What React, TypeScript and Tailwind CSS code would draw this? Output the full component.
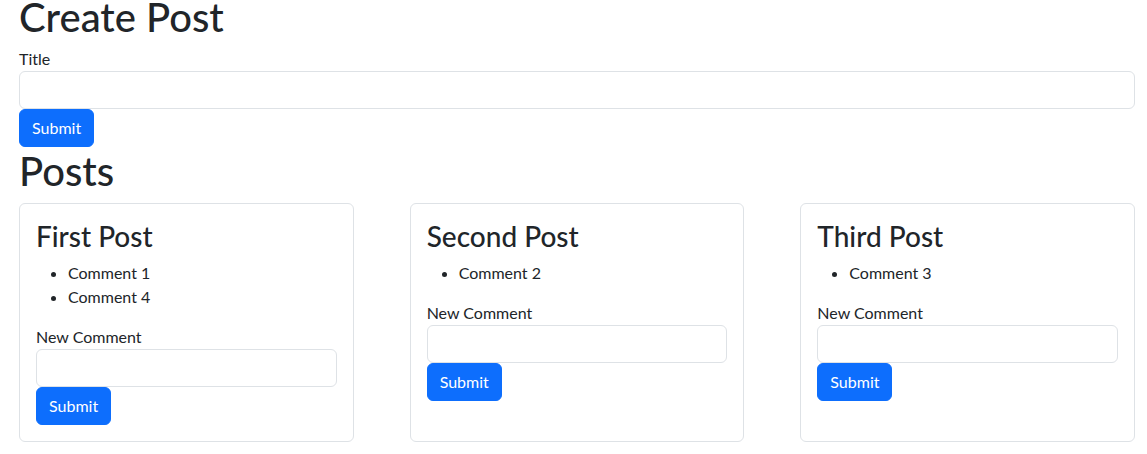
import React, { useState } from 'react';

interface Post {
  id: number;
  title: string;
  comments: string[];
}

const initialPosts: Post[] = [
  { id: 1, title: 'First Post', comments: ['Comment 1', 'Comment 4'] },
  { id: 2, title: 'Second Post', comments: ['Comment 2'] },
  { id: 3, title: 'Third Post', comments: ['Comment 3'] },
];

const inputClass =
  'block w-full h-[38px] px-3 py-[6px] text-base leading-6 bg-white border border-[#dee2e6] rounded-[6px] outline-none';

const buttonClass =
  'h-[38px] px-3 py-[6px] text-base leading-6 text-white bg-[#0d6efd] border border-[#0d6efd] rounded-[6px]';

const PostCard: React.FC<{ post: Post }> = ({ post }) => {
  const [comment, setComment] = useState('');

  return (
    <div className="border border-[#dee2e6] rounded-[6px] bg-white p-4">
      <h3 className="text-[28px] leading-[1.2] font-medium mb-[7px]">{post.title}</h3>
      <ul className="list-disc pl-8 mb-4">
        {post.comments.map((c) => (
          <li key={c} className="leading-6">
            {c}
          </li>
        ))}
      </ul>
      <label className="block leading-6">New Comment</label>
      <input
        type="text"
        value={comment}
        onChange={(e) => setComment(e.target.value)}
        className={inputClass}
      />
      <button className={buttonClass}>Submit</button>
    </div>
  );
};

export default function App() {
  const [title, setTitle] = useState('');

  return (
    <div
      className="min-h-screen bg-white text-[#212529] pl-[19px] pr-[12px] overflow-hidden"
      style={{ fontFamily: 'Lato, "Noto Sans", sans-serif' }}
    >
      {/* Create Post */}
      <h1 className="text-[40px] leading-[34px] font-medium mb-[13px]">Create Post</h1>
      <label className="block leading-6">Title</label>
      <input
        type="text"
        value={title}
        onChange={(e) => setTitle(e.target.value)}
        className={inputClass}
      />
      <button className={buttonClass}>Submit</button>

      {/* Posts */}
      <h1 className="text-[40px] leading-[48px] font-medium mb-2">Posts</h1>
      <div className="grid grid-cols-3 gap-[56px]">
        {initialPosts.map((p) => (
          <PostCard key={p.id} post={p} />
        ))}
      </div>
    </div>
  );
}
